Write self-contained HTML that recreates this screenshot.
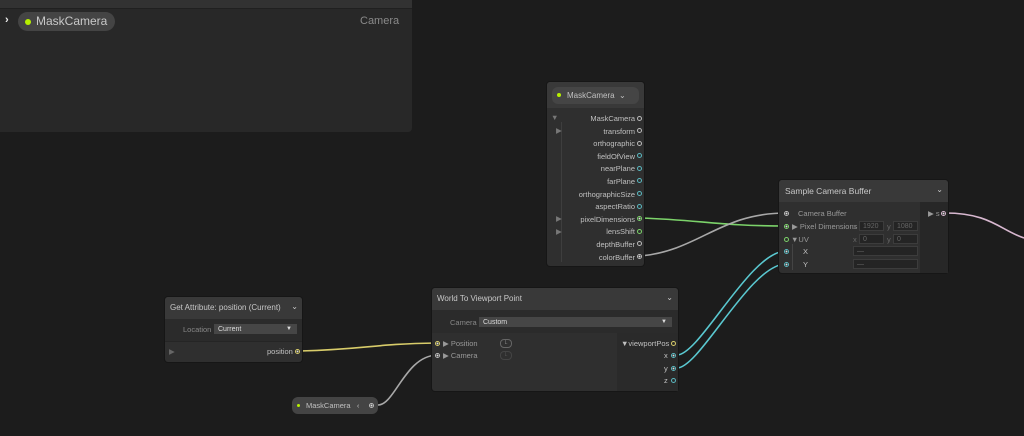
<!DOCTYPE html><html><head><style>
body{margin:0;width:1024px;height:436px;background:#1c1c1c;overflow:hidden;position:relative;font-family:"Liberation Sans",sans-serif;color:#c4c4c4}
.a{position:absolute}
.node{position:absolute;background:#2f2f2f;border-radius:3px;box-shadow:0 0 0 1px #161616}
.hd{position:absolute;left:0;right:0;top:0;background:#393939;border-radius:3px 3px 0 0;font-size:8.5px;color:#c8c8c8}
.t{position:absolute;font-size:7.5px;white-space:nowrap;color:#c0c0c0}
.p{position:absolute;width:5px;height:5px;border-radius:50%;border:1px solid #bbb;box-sizing:border-box}
.c{border-color:#5ab8c0}.g{border-color:#7cd36a}.y{border-color:#d8cc6a}
.f{background:radial-gradient(circle,#ddd 35%,transparent 45%)}
.fi{position:absolute;background:#242424;border:1px solid #3c3c3c;height:10px;font-size:7px;color:#666;box-sizing:border-box;padding-left:3px;line-height:9px}
</style></head><body>
<svg class="a" style="left:0;top:0" width="1024" height="436">
<g fill="none" stroke-width="1.6">
<path d="M300 351 C370 349 370 344 437 343" stroke="#d8cc6a"/>
<path d="M378 405 C395 405 405 356 437 355" stroke="#a8a8a8"/>
<path d="M641 218 C700 220 720 226 786 226" stroke="#7cd36a"/>
<path d="M641 256 C700 250 720 213 786 213" stroke="#a8a8a8"/>
<path d="M677 355 C700 355 750 251 786 251" stroke="#5ac8d0"/>
<path d="M677 368 C700 368 750 264 786 264" stroke="#5ac8d0"/>
<path d="M945 213 C990 213 1000 230 1024 238" stroke="#d8b8d0"/>
</g></svg>
<!-- top panel -->
<div class="a" style="left:0;top:0;width:412px;height:132px;background:#282828;border-radius:0 0 4px 0"></div>
<div class="a" style="left:0;top:0;width:412px;height:8px;background:#323232;border-bottom:1px solid #202020"></div>
<div class="a" style="left:5px;top:14px;color:#eee;font-size:11px;font-weight:bold">›</div>
<div class="a" style="left:18px;top:12px;width:97px;height:19px;border-radius:10px;background:#444"></div>
<div class="a" style="left:25px;top:19px;width:6px;height:6px;border-radius:50%;background:#b6f000"></div>
<div class="a" style="left:36px;top:14px;font-size:12px;color:#c8c8c8">MaskCamera</div>
<div class="a" style="left:360px;top:15px;font-size:11px;color:#8a8a8a">Camera</div>
<!-- camera node -->
<div class="node" style="left:547px;top:82px;width:97px;height:184px">
<div class="hd" style="height:26px"></div>
<div class="a" style="left:5px;top:5px;width:87px;height:17px;border-radius:6px;background:#454545"></div>
<div class="a" style="left:10px;top:11px;width:4px;height:4px;border-radius:50%;background:#b6f000"></div>
<div class="t" style="left:20px;top:9px;font-size:8px">MaskCamera &nbsp;⌄</div>
<div class="a" style="left:14px;top:40px;width:1px;height:140px;background:#3e3e3e"></div>
</div>
<div class="t" style="left:551px;top:113px;color:#777">▼</div>
<div class="t" style="left:556px;top:126px;color:#777">▶</div>
<div class="t" style="left:556px;top:214px;color:#777">▶</div>
<div class="t" style="left:556px;top:227px;color:#777">▶</div>
<div class="a" style="right:389px;top:113px;text-align:right;font-size:7.5px;line-height:12.6px;color:#c0c0c0">MaskCamera<br>transform<br>orthographic<br>fieldOfView<br>nearPlane<br>farPlane<br>orthographicSize<br>aspectRatio<br>pixelDimensions<br>lensShift<br>depthBuffer<br>colorBuffer</div>
<div class="p" style="left:637px;top:116px"></div><div class="p" style="left:637px;top:128px"></div><div class="p" style="left:637px;top:141px"></div>
<div class="p c" style="left:637px;top:153px"></div><div class="p c" style="left:637px;top:166px"></div><div class="p c" style="left:637px;top:178px"></div><div class="p c" style="left:637px;top:191px"></div><div class="p c" style="left:637px;top:204px"></div>
<div class="p g f" style="left:637px;top:216px"></div><div class="p g" style="left:637px;top:229px"></div><div class="p" style="left:637px;top:241px"></div><div class="p f" style="left:637px;top:254px"></div>
<!-- sample camera buffer -->
<div class="node" style="left:779px;top:180px;width:169px;height:93px">
<div class="hd" style="height:22px"><span style="position:absolute;left:6px;top:6px">Sample Camera Buffer</span><span style="position:absolute;right:5px;top:5px;font-size:8px">⌄</span></div>
<div class="a" style="left:141px;top:22px;right:0;bottom:0;background:#272727"></div>
<div class="a" style="left:13px;top:64px;width:1px;height:26px;background:#444"></div>
</div>
<div class="p f" style="left:784px;top:211px"></div><div class="t" style="left:798px;top:209px;color:#999">Camera Buffer</div>
<div class="p g f" style="left:784px;top:224px"></div><div class="t" style="left:792px;top:222px;color:#999">▶ Pixel Dimensions</div>
<div class="t" style="left:853px;top:222px;color:#666">x</div><div class="fi" style="left:859px;top:221px;width:25px">1920</div><div class="t" style="left:887px;top:222px;color:#666">y</div><div class="fi" style="left:893px;top:221px;width:25px">1080</div>
<div class="p g" style="left:784px;top:237px"></div><div class="t" style="left:791px;top:235px;color:#999">▼UV</div>
<div class="t" style="left:853px;top:235px;color:#666">x</div><div class="fi" style="left:859px;top:234px;width:25px">0</div><div class="t" style="left:887px;top:235px;color:#666">y</div><div class="fi" style="left:893px;top:234px;width:25px">0</div>
<div class="p c f" style="left:784px;top:249px"></div><div class="t" style="left:803px;top:247px">X</div><div class="fi" style="left:853px;top:246px;width:65px">—</div>
<div class="p c f" style="left:784px;top:262px"></div><div class="t" style="left:803px;top:260px">Y</div><div class="fi" style="left:853px;top:259px;width:65px">—</div>
<div class="t" style="left:928px;top:209px;color:#999">▶ s</div><div class="p f" style="border-color:#d8b8d0;left:941px;top:211px"></div>
<!-- get attribute -->
<div class="node" style="left:165px;top:297px;width:137px;height:65px">
<div class="hd" style="height:22px"><span style="position:absolute;left:5px;top:6px;font-size:8px">Get Attribute: position (Current)</span><span style="position:absolute;right:4px;top:5px;font-size:8px">⌄</span></div>
<div class="a" style="left:0;right:0;top:22px;height:22px;background:#2b2b2b;border-bottom:1px solid #252525"></div>
</div>
<div class="t" style="left:183px;top:325px;color:#888">Location</div>
<div class="fi" style="left:214px;top:324px;width:83px;background:#464646;border-color:#464646;color:#ddd">Current<span style="position:absolute;right:4px;font-size:6px">▼</span></div>
<div class="t" style="left:169px;top:347px;color:#666">▶</div>
<div class="t" style="left:267px;top:347px">position</div><div class="p y f" style="left:295px;top:349px"></div>
<!-- world to viewport -->
<div class="node" style="left:432px;top:288px;width:246px;height:103px">
<div class="hd" style="height:22px"><span style="position:absolute;left:5px;top:6px;font-size:8px">World To Viewport Point</span><span style="position:absolute;right:5px;top:5px;font-size:8px">⌄</span></div>
<div class="a" style="left:0;right:0;top:22px;height:23px;background:#2b2b2b"></div>
<div class="a" style="left:185px;right:0;top:45px;bottom:0;background:#2a2a2a"></div>
</div>
<div class="t" style="left:450px;top:318px;color:#888">Camera</div>
<div class="fi" style="left:479px;top:317px;width:193px;background:#464646;border-color:#464646;color:#ddd">Custom<span style="position:absolute;right:4px;font-size:6px">▼</span></div>
<div class="p y f" style="left:435px;top:341px"></div><div class="t" style="left:443px;top:339px;color:#999">▶ Position</div><div class="a" style="left:500px;top:339px;width:10px;height:7px;border:1px solid #666;border-radius:4px;font-size:5px;color:#888;text-align:center;line-height:7px">L</div>
<div class="p f" style="left:435px;top:353px"></div><div class="t" style="left:443px;top:351px;color:#999">▶ Camera</div><div class="a" style="left:500px;top:351px;width:10px;height:7px;border:1px solid #444;border-radius:4px;font-size:5px;color:#555;text-align:center;line-height:7px">L</div>
<div class="t" style="left:621px;top:339px">▼viewportPos</div><div class="p y" style="left:671px;top:341px"></div>
<div class="t" style="left:664px;top:351px">x</div><div class="p c f" style="left:671px;top:353px"></div>
<div class="t" style="left:664px;top:364px">y</div><div class="p c f" style="left:671px;top:366px"></div>
<div class="t" style="left:664px;top:376px">z</div><div class="p c" style="left:671px;top:378px"></div>
<!-- mask camera pill -->
<div class="a" style="left:292px;top:397px;width:86px;height:17px;border-radius:6px;background:#444"></div>
<div class="a" style="left:297px;top:404px;width:3px;height:3px;border-radius:50%;background:#b6f000"></div>
<div class="t" style="left:306px;top:401px">MaskCamera &nbsp; ‹</div><div class="p f" style="left:369px;top:403px"></div>
</body></html>
